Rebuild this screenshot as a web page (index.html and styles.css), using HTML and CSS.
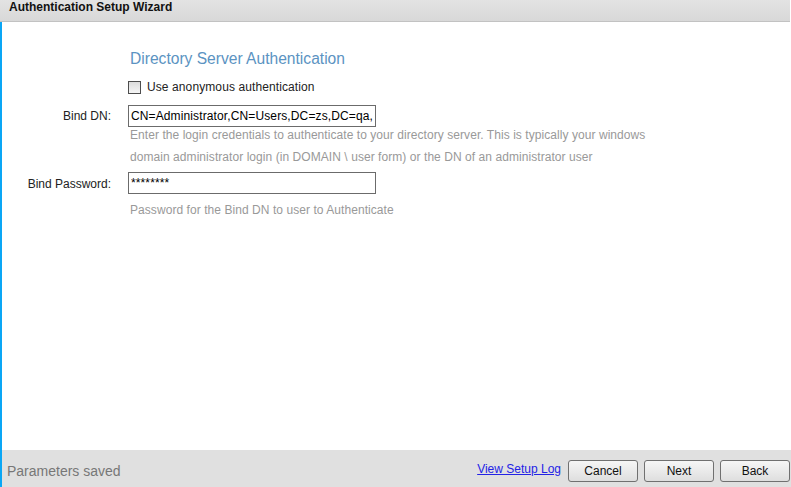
FILE: index.html
```html
<!DOCTYPE html>
<html>
<head>
<meta charset="utf-8">
<link rel="stylesheet" href="styles.css">
</head>
<body>
<div class="wizard">
  <div class="titlebar"><span class="title">Authentication Setup Wizard</span></div>
  <div class="main">
    <h1 class="heading">Directory Server Authentication</h1>
    <div class="form">
      <div class="label"></div>
      <label class="check"><span class="box"></span><span>Use anonymous authentication</span></label>

      <div class="label row-dn">Bind DN:</div>
      <input class="field row-dn" type="text" value="CN=Administrator,CN=Users,DC=zs,DC=qa,">
      <div class="label"></div>
      <div class="help">Enter the login credentials to authenticate to your directory server. This is typically your windows<br>domain administrator login (in DOMAIN \ user form) or the DN of an administrator user</div>

      <div class="label row-pw">Bind Password:</div>
      <input class="field row-pw" type="text" value="********">
      <div class="label"></div>
      <div class="help help-pw">Password for the Bind DN to user to Authenticate</div>
    </div>
  </div>
  <div class="footer">
    <span class="status">Parameters saved</span>
    <div class="actions">
      <a class="log" href="#">View Setup Log</a>
      <button class="btn">Cancel</button>
      <button class="btn">Next</button>
      <button class="btn">Back</button>
    </div>
  </div>
</div>
</body>
</html>
```
FILE: styles.css
```css
html, body {
  margin: 0;
  padding: 0;
  background: #ffffff;
}
body {
  width: 791px;
  height: 487px;
  overflow: hidden;
  font-family: "Liberation Sans", Arial, sans-serif;
}
.wizard {
  display: flex;
  flex-direction: column;
  width: 791px;
  height: 487px;
}
.titlebar {
  height: 21px;
  border-bottom: 1px solid #c2c2c2;
  background: linear-gradient(#e3e3e3, #d8d8d8);
  padding-left: 9px;
  margin-right: 1px;
  box-sizing: content-box;
}
.title {
  display: block;
  font-size: 12px;
  font-weight: bold;
  color: #111;
  line-height: 14px;
}
.main {
  flex: 1;
  border-left: 2px solid #0aa6f5;
  padding-top: 27px;
}
.heading {
  margin: 0 0 0 128px;
  font-size: 15.6px;
  font-weight: normal;
  color: #5b93c2;
  line-height: 20px;
}
.form {
  display: grid;
  grid-template-columns: 109px 1fr;
  column-gap: 17px;
  margin-top: 9px;
}
.label {
  text-align: right;
  font-size: 12px;
  color: #222;
  align-self: center;
}
.check {
  display: flex;
  align-items: center;
  gap: 6px;
  font-size: 12px;
  color: #222;
  height: 18px;
  letter-spacing: 0.1px;
}
.box {
  width: 11px;
  height: 11px;
  border: 1px solid #4d4d4d;
  background: linear-gradient(#dcdcdc, #f5f5f5);
}
.field {
  width: 248px;
  height: 22px;
  box-sizing: border-box;
  border: 1px solid #6b6b6b;
  padding: 0 2px;
  margin: 0;
  font-family: "Liberation Sans", Arial, sans-serif;
  font-size: 12px;
  letter-spacing: 0.12px;
  color: #000;
  outline: none;
}
.row-dn {
  margin-top: 9px;
}
.row-pw {
  margin-top: 5px;
}
.help {
  font-size: 12px;
  color: #999;
  line-height: 22px;
  margin-left: 2px;
  margin-top: -3px;
  letter-spacing: 0.06px;
}
.help + .label + .field {
  margin-top: 4px;
}
.help-pw {
  margin-top: 5px;
}
.footer {
  height: 37px;
  background: #e0e0e0;
  border-left: 2px solid #0aa6f5;
  display: flex;
  align-items: center;
  justify-content: space-between;
  padding: 5px 1px 0 5px;
  box-sizing: border-box;
}
.status {
  font-size: 14px;
  color: #777;
}
.actions {
  display: flex;
  align-items: center;
  gap: 6px;
}
.log {
  font-size: 12px;
  color: #2323e6;
  text-decoration: underline;
  margin-right: 1px;
  margin-top: -4px;
}
.btn {
  width: 70px;
  height: 22px;
  border: 1px solid #707070;
  border-radius: 3px;
  background: linear-gradient(#f6f6f6, #dedede);
  font-family: "Liberation Sans", Arial, sans-serif;
  font-size: 12px;
  color: #111;
  padding: 0;
}
```
